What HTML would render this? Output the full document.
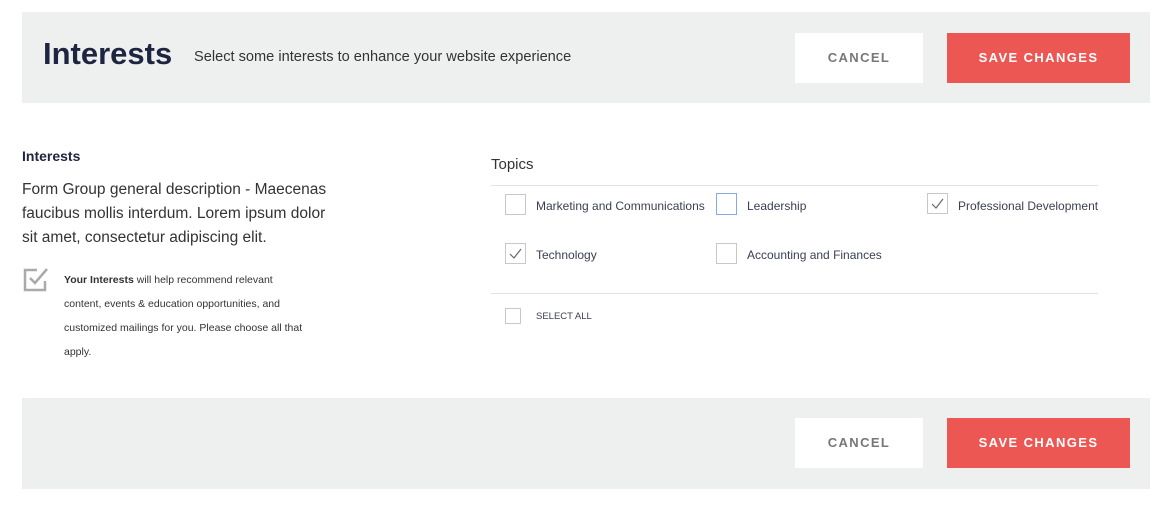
<!DOCTYPE html>
<html><head><style>
body{margin:0;width:1170px;height:510px;background:#fff;font-family:"Liberation Sans",sans-serif;color:#1e2540;position:relative;overflow:hidden}
.a{position:absolute;white-space:nowrap}
.bar{position:absolute;left:22px;width:1128px;height:91px;background:#eeefef}
.btn{position:absolute;height:50px;line-height:50px;text-align:center;font-size:13px;font-weight:bold;letter-spacing:1.4px}
.c{background:#fff;color:#777;width:128px;left:795px}
.s{background:#ec5753;color:#fff;width:183px;left:947px}
.cb{position:absolute;width:19px;height:19px;border:1px solid #c8c8c8;background:#fff}
.cb svg{position:absolute;left:3px;top:3px}
.l{font-size:12px;color:#3a3f52}
</style></head><body>
<div class="bar" style="top:12px"></div>
<div class="a" style="left:43px;top:36px;font-size:31px;font-weight:bold;color:#1e2540">Interests</div>
<div class="a" style="left:194px;top:49px;font-size:14.6px;color:#333">Select some interests to enhance your website experience</div>
<div class="btn c" style="top:33px">CANCEL</div>
<div class="btn s" style="top:33px">SAVE CHANGES</div>

<div class="a" style="left:22px;top:148px;font-size:14px;font-weight:bold">Interests</div>
<div class="a" style="left:22px;top:178px;font-size:15.5px;line-height:24px;color:#333;white-space:normal;width:310px">Form Group general description - Maecenas faucibus mollis interdum. Lorem ipsum dolor sit amet, consectetur adipiscing elit.</div>
<svg class="a" style="left:22px;top:267px" width="28" height="26" viewBox="0 0 28 26"><path d="M15 3H3v20h20v-9" fill="none" stroke="#aaa" stroke-width="2.5"/><path d="M8 11l5 5 12-14" fill="none" stroke="#aaa" stroke-width="2.5"/></svg>
<div class="a" style="left:64px;top:268px;font-size:10.5px;line-height:24px;color:#333;white-space:normal;width:242px"><b>Your Interests</b> will help recommend relevant content, events &amp; education opportunities, and customized mailings for you. Please choose all that apply.</div>

<div class="a" style="left:491px;top:156px;font-size:15px;color:#333">Topics</div>
<div class="a" style="left:491px;top:185px;width:607px;border-top:1px solid #e3e3e3"></div>
<div class="cb" style="left:505px;top:194px"></div><div class="a l" style="left:536px;top:199px">Marketing and Communications</div>
<div class="cb" style="left:716px;top:193px;border-color:#8aa8dd;width:19px;height:20px"></div><div class="a l" style="left:747px;top:199px">Leadership</div>
<div class="cb" style="left:927px;top:193px"><svg width="13" height="13"><path d="M1 7l4 4 7-9" fill="none" stroke="#666" stroke-width="1.2"/></svg></div><div class="a l" style="left:958px;top:199px">Professional Development</div>
<div class="cb" style="left:505px;top:243px"><svg width="13" height="13"><path d="M1 7l4 4 7-9" fill="none" stroke="#666" stroke-width="1.2"/></svg></div><div class="a l" style="left:536px;top:248px">Technology</div>
<div class="cb" style="left:716px;top:243px"></div><div class="a l" style="left:747px;top:248px">Accounting and Finances</div>
<div class="a" style="left:491px;top:293px;width:607px;border-top:1px solid #e3e3e3"></div>
<div class="cb" style="left:505px;top:308px;width:14px;height:14px"></div><div class="a" style="left:536px;top:311px;font-size:9.5px;color:#3a3f52">SELECT ALL</div>

<div class="bar" style="top:398px"></div>
<div class="btn c" style="top:418px">CANCEL</div>
<div class="btn s" style="top:418px">SAVE CHANGES</div>
</body></html>
